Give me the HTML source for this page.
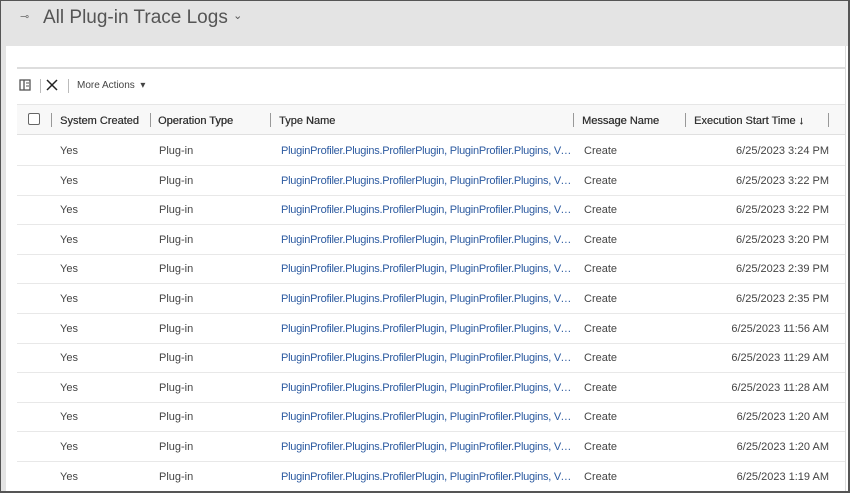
<!DOCTYPE html>
<html><head><style>
*{margin:0;padding:0;box-sizing:border-box}
body{width:850px;height:493px;overflow:hidden;background:#fff;font-family:"Liberation Sans",sans-serif;position:relative}
.frame{position:absolute;left:0;top:0;width:850px;height:493px;border:1px solid #555;border-bottom-width:2px;border-right-width:2px}
.top{position:absolute;left:0;top:0;width:850px;height:46px;background:#e4e4e4}
.lstrip{position:absolute;left:0;top:0;width:6px;height:493px;background:#e4e4e4}
.rline{position:absolute;left:845px;top:46px;width:1px;height:447px;background:#ddd}
.title{position:absolute;left:43px;top:7px;font-size:19px;color:#555}
.pin{position:absolute;left:20px;top:10px;font-size:11px;color:#777}
.tline{position:absolute;left:17px;top:67px;width:828px;height:2px;background:#ddd}
.t{position:absolute;font-size:11px;color:#444;white-space:nowrap}
.hdr{position:absolute;left:17px;top:104px;width:828px;height:31px;background:#f8f8f8;border-top:1px solid #e6e6e6;border-bottom:1px solid #e0e0e0}
.sep{position:absolute;width:1px;height:14px;background:#999}
.row{position:absolute;left:17px;width:828px;height:1px;background:#e8e8e8}
.h{color:#333;font-size:11px;top:115px;text-shadow:0.3px 0 0 #333}
.link{color:#2c5aa0;width:292px;overflow:hidden;text-overflow:ellipsis;letter-spacing:-0.25px}
.date{position:absolute;right:21px;font-size:11px;color:#444}
</style></head><body>
<div class="top"></div><div class="lstrip"></div><div class="rline"></div>
<div class="pin">⊸</div>
<div class="title">All Plug-in Trace Logs <span style="font-size:11px;vertical-align:4px">&#8964;</span></div>
<div class="tline"></div>
<svg style="position:absolute;left:19px;top:79px" width="12" height="12" viewBox="0 0 12 12"><rect x="1" y="1" width="10" height="10" fill="none" stroke="#555" stroke-width="1.3"/><line x1="5" y1="1" x2="5" y2="11" stroke="#555" stroke-width="1.3"/><line x1="7" y1="4" x2="10" y2="4" stroke="#555"/><line x1="7" y1="7" x2="10" y2="7" stroke="#555"/></svg>
<div class="sep" style="left:40px;top:79px;background:#bbb"></div>
<svg style="position:absolute;left:46px;top:79px" width="12" height="12"><path d="M1 1L11 11M11 1L1 11" stroke="#222" stroke-width="1.5"/></svg>
<div class="sep" style="left:68px;top:79px;background:#bbb"></div>
<div class="t" style="left:77px;top:80px;font-size:10px">More Actions &nbsp;▾</div>
<div class="hdr"></div>
<div style="position:absolute;left:28px;top:113px;width:12px;height:12px;border:1px solid #666;border-radius:2px;background:#fff"></div>
<div class="sep" style="left:51px;top:113px"></div>
<div class="sep" style="left:150px;top:113px"></div>
<div class="sep" style="left:270px;top:113px"></div>
<div class="sep" style="left:573px;top:113px"></div>
<div class="sep" style="left:685px;top:113px"></div>
<div class="sep" style="left:828px;top:113px"></div>
<div class="t h" style="left:60px">System Created</div>
<div class="t h" style="left:158px">Operation Type</div>
<div class="t h" style="left:279px">Type Name</div>
<div class="t h" style="left:582px">Message Name</div>
<div class="t h" style="left:694px">Execution Start Time ↓</div>
<div id="rows"></div>
<script>
var d=["3:24 PM","3:22 PM","3:22 PM","3:20 PM","2:39 PM","2:35 PM","11:56 AM","11:29 AM","11:28 AM","1:20 AM","1:20 AM","1:19 AM"],h="";
for(var i=0;i<12;i++){var y=145+i*29.6;
h+='<div class="t" style="left:60px;top:'+y+'px">Yes</div><div class="t" style="left:159px;top:'+y+'px">Plug-in</div><div class="t link" style="left:281px;top:'+y+'px">PluginProfiler.Plugins.ProfilerPlugin, PluginProfiler.Plugins, Version=1.0</div><div class="t" style="left:584px;top:'+y+'px">Create</div><div class="date" style="top:'+y+'px">6/25/2023 '+d[i]+'</div>';
if(i<11)h+='<div class="row" style="top:'+(165+i*29.6)+'px"></div>';}
document.getElementById("rows").innerHTML=h;
</script>
<div class="frame"></div>
</body></html>
